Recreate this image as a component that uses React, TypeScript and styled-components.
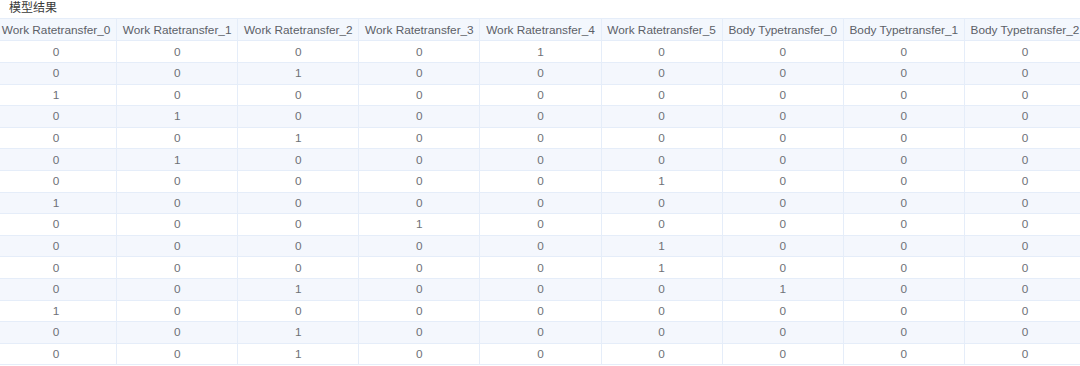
import styled, { createGlobalStyle } from "styled-components";

const GlobalStyle = createGlobalStyle`
  body {
    margin: 0;
    background: #ffffff;
    font-family: "Liberation Sans", Arial, "Noto Sans CJK SC", sans-serif;
  }
`;

const Page = styled.div`
  width: 1080px;
  height: 366px;
  overflow: hidden;
  background: #ffffff;
`;

const Title = styled.div`
  height: 18px;
  line-height: 16px;
  padding-left: 9px;
  font-size: 12px;
  color: #3a3a3a;
  font-family: "Liberation Sans", "Noto Sans CJK SC", sans-serif;
`;

const TableScroll = styled.div`
  width: 100%;
  overflow: hidden;
`;

const Table = styled.table`
  margin-left: -5px;
  width: 1091px;
  table-layout: fixed;
  border-collapse: collapse;
  font-size: 11.8px;
`;

const HeadCell = styled.th`
  height: 21.4px;
  padding: 0;
  font-weight: normal;
  color: #5c6067;
  background: #f3f7fd;
  border: 1px solid #e5edf9;
  text-align: center;
  white-space: nowrap;
`;

const Row = styled.tr<{ $striped: boolean }>`
  background: ${(p) => (p.$striped ? "#f4f7fd" : "#ffffff")};
`;

const Cell = styled.td`
  height: 20.6px;
  padding: 0;
  color: #6e7177;
  border: 1px solid #e5edf9;
  text-align: center;
`;

const columns = [
  "Work Ratetransfer_0",
  "Work Ratetransfer_1",
  "Work Ratetransfer_2",
  "Work Ratetransfer_3",
  "Work Ratetransfer_4",
  "Work Ratetransfer_5",
  "Body Typetransfer_0",
  "Body Typetransfer_1",
  "Body Typetransfer_2",
];

const rows = [
  [0, 0, 0, 0, 1, 0, 0, 0, 0],
  [0, 0, 1, 0, 0, 0, 0, 0, 0],
  [1, 0, 0, 0, 0, 0, 0, 0, 0],
  [0, 1, 0, 0, 0, 0, 0, 0, 0],
  [0, 0, 1, 0, 0, 0, 0, 0, 0],
  [0, 1, 0, 0, 0, 0, 0, 0, 0],
  [0, 0, 0, 0, 0, 1, 0, 0, 0],
  [1, 0, 0, 0, 0, 0, 0, 0, 0],
  [0, 0, 0, 1, 0, 0, 0, 0, 0],
  [0, 0, 0, 0, 0, 1, 0, 0, 0],
  [0, 0, 0, 0, 0, 1, 0, 0, 0],
  [0, 0, 1, 0, 0, 0, 1, 0, 0],
  [1, 0, 0, 0, 0, 0, 0, 0, 0],
  [0, 0, 1, 0, 0, 0, 0, 0, 0],
  [0, 0, 1, 0, 0, 0, 0, 0, 0],
];

export default function App() {
  return (
    <Page>
      <GlobalStyle />
      <Title>模型结果</Title>
      <TableScroll>
        <Table>
          <thead>
            <tr>
              {columns.map((c) => (
                <HeadCell key={c}>{c}</HeadCell>
              ))}
            </tr>
          </thead>
          <tbody>
            {rows.map((r, i) => (
              <Row key={i} $striped={i % 2 === 1}>
                {r.map((v, j) => (
                  <Cell key={j}>{v}</Cell>
                ))}
              </Row>
            ))}
          </tbody>
        </Table>
      </TableScroll>
    </Page>
  );
}
